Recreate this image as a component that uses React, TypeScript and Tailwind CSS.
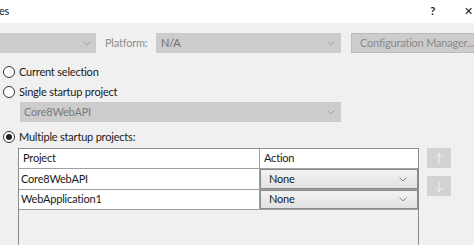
const font = { fontFamily: 'Lato, "Noto Sans", sans-serif' };

function Chevron({ className = "" }: { className?: string }) {
  return (
    <svg width="8" height="5" viewBox="0 0 8 5" className={className}>
      <path d="M0.5 0.5 L4 4 L7.5 0.5" fill="none" stroke="currentColor" strokeWidth="1" />
    </svg>
  );
}

function Radio({ checked }: { checked?: boolean }) {
  return (
    <span className="flex h-[12px] w-[12px] shrink-0 items-center justify-center rounded-full border border-[#333] bg-white">
      {checked && <span className="h-[6px] w-[6px] rounded-full bg-[#222]" />}
    </span>
  );
}

function ActionCell() {
  return (
    <div className="flex h-full items-center justify-between border border-[#8a8a8a] bg-gradient-to-b from-[#f2f2f2] to-[#e2e2e2] pl-[8px] pr-[10px]">
      <span>None</span>
      <Chevron className="text-[#888]" />
    </div>
  );
}

export default function App() {
  return (
    <div
      className="h-[245px] w-[474px] overflow-hidden bg-[#f0f0f0] text-[11px] tracking-[-0.2px] text-[#1a1a1a]"
      style={font}
    >
      <div className="flex h-[23px] items-center bg-white">
        <span className="-ml-[1px]">es</span>
        <span className="ml-auto mr-[29px] font-bold text-[#222]">?</span>
        <span className="w-[10px] text-[#222]">✕</span>
      </div>

      <div className="mt-[10px] flex h-[20px] items-center">
        <div className="flex h-full w-[96px] shrink-0 items-center justify-end bg-[#cccccc] pr-[5px]">
          <Chevron className="text-[#a0a0a0]" />
        </div>
        <span className="ml-[9px] w-[42px] shrink-0 whitespace-nowrap text-[#8c8c8c]">Platform:</span>
        <div className="ml-[9px] flex h-full w-[185px] shrink-0 items-center justify-between bg-[#cccccc] pl-[5px] pr-[6px] text-[#6e6e6e]">
          <span>N/A</span>
          <Chevron className="text-[#a0a0a0]" />
        </div>
        <div className="ml-[10px] flex h-full w-[130px] shrink-0 items-center overflow-hidden border border-[#bdbdbd] bg-[#cccccc] pl-[8px] whitespace-nowrap text-[#8a8a8a]">
          Configuration Manager...
        </div>
      </div>

      <div className="mt-[11px] flex h-[16px] items-center gap-[4px] pl-[3px]">
        <Radio />
        <span>Current selection</span>
      </div>
      <div className="mt-[4px] flex h-[16px] items-center gap-[4px] pl-[3px]">
        <Radio />
        <span>Single startup project</span>
      </div>
      <div className="ml-[20px] mt-[2px] flex h-[20px] w-[321px] items-center justify-between bg-[#cccccc] pl-[4px] pr-[6px] text-[#7a7a7a]">
        <span>Core8WebAPI</span>
        <Chevron className="text-[#a0a0a0]" />
      </div>
      <div className="mt-[7px] flex h-[16px] items-center gap-[4px] pl-[3px]">
        <Radio checked />
        <span>Multiple startup projects:</span>
      </div>

      <div className="mt-[3px] flex items-start">
        <div className="ml-[18px] h-[100px] w-[401px] shrink-0 border border-[#8c8c8c] bg-[#f0f0f0]">
          <div className="grid h-[19px] grid-cols-[241px_1fr] bg-white">
            <div className="flex items-center border-r border-[#a0a0a0] pl-[4px]">Project</div>
            <div className="flex items-center pl-[4px]">Action</div>
          </div>
          <div className="grid h-[21px] grid-cols-[241px_1fr] border-t border-[#a0a0a0] bg-white">
            <div className="flex items-center border-r border-[#a0a0a0] pl-[2px]">Core8WebAPI</div>
            <ActionCell />
          </div>
          <div className="grid h-[21px] grid-cols-[241px_1fr] border-y border-[#a0a0a0] bg-white">
            <div className="flex items-center border-r border-[#a0a0a0] pl-[2px]">WebApplication1</div>
            <ActionCell />
          </div>
        </div>
        <div className="ml-[8px] flex flex-col gap-[8px]">
          <div className="flex h-[20px] w-[24px] items-center justify-center bg-[#d2d2d2] text-[#f4f4f4]">
            <svg width="10" height="13" viewBox="0 0 10 13">
              <path d="M5 12 V1.5 M1 5.5 L5 1.5 L9 5.5" fill="none" stroke="currentColor" strokeWidth="1" />
            </svg>
          </div>
          <div className="flex h-[20px] w-[24px] items-center justify-center bg-[#d2d2d2] text-[#f4f4f4]">
            <svg width="10" height="13" viewBox="0 0 10 13">
              <path d="M5 1 V11.5 M1 7.5 L5 11.5 L9 7.5" fill="none" stroke="currentColor" strokeWidth="1" />
            </svg>
          </div>
        </div>
      </div>
    </div>
  );
}
